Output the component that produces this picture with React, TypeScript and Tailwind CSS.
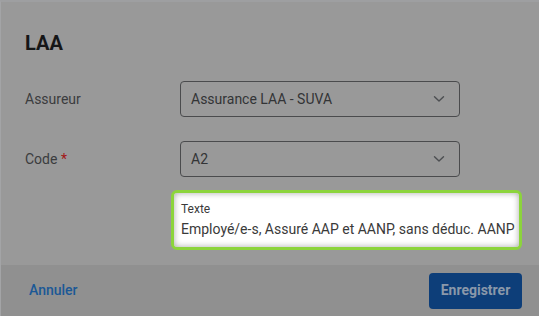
import React from "react";

function Chevron() {
  return (
    <svg width="12" height="8" viewBox="0 0 12 8" fill="none" className="shrink-0">
      <path d="M1.5 1.8 L6 6 L10.5 1.8" stroke="#4d4f52" strokeWidth="1.4" strokeLinecap="round" strokeLinejoin="round" />
    </svg>
  );
}

function Select({ value }: { value: string }) {
  return (
    <div className="w-[280px] h-[36px] rounded-[4px] border border-[#4a4b4d] flex items-center justify-between pl-[10px] pr-[14px] text-[14px] text-[#333436]">
      <span>{value}</span>
      <Chevron />
    </div>
  );
}

export default function App() {
  return (
    <div
      className="w-[539px] h-[316px] bg-[#999999] overflow-hidden flex flex-col border-l border-[#a3a4a6] border-t-[2px] border-t-[#9e9fa1]"
      style={{ fontFamily: "Roboto, 'Noto Sans', sans-serif" }}
    >
      <div className="flex-1 flex flex-col pl-[24px] pt-[27px]">
        <h1 className="text-[20px] leading-[28px] font-bold text-[#151617]">LAA</h1>
        <div className="mt-[24px] flex items-center">
          <div className="w-[155px] text-[14px] text-[#3b3c3e]">Assureur</div>
          <Select value="Assurance LAA - SUVA" />
        </div>
        <div className="mt-[24px] flex items-center">
          <div className="w-[155px] text-[14px] text-[#3b3c3e]">
            Code <span className="text-[#a31515]">*</span>
          </div>
          <Select value="A2" />
        </div>
        <div className="mt-[13px] ml-[146px] w-[351px] h-[60px] rounded-[6px] border-[3px] border-[#8cd43c] bg-white shadow-[inset_0_0_6px_rgba(0,0,0,0.35)] px-[7px] pt-[8px] text-[#3a3a3a]">
          <div className="text-[12px] leading-[16px]">Texte</div>
          <div className="text-[14px] leading-[20px] mt-[2px] whitespace-nowrap">Employé/e-s, Assuré AAP et AANP, sans déduc. AANP</div>
        </div>
      </div>
      <div className="h-[51px] bg-[#909090] flex items-center justify-between pl-[28px] pr-[17px]">
        <span className="text-[14px] font-medium text-[#1b5896]">Annuler</span>
        <button className="w-[93px] h-[36px] rounded-[4px] bg-[#0d3e79] text-[14px] font-bold text-[#8a98aa]">Enregistrer</button>
      </div>
    </div>
  );
}
